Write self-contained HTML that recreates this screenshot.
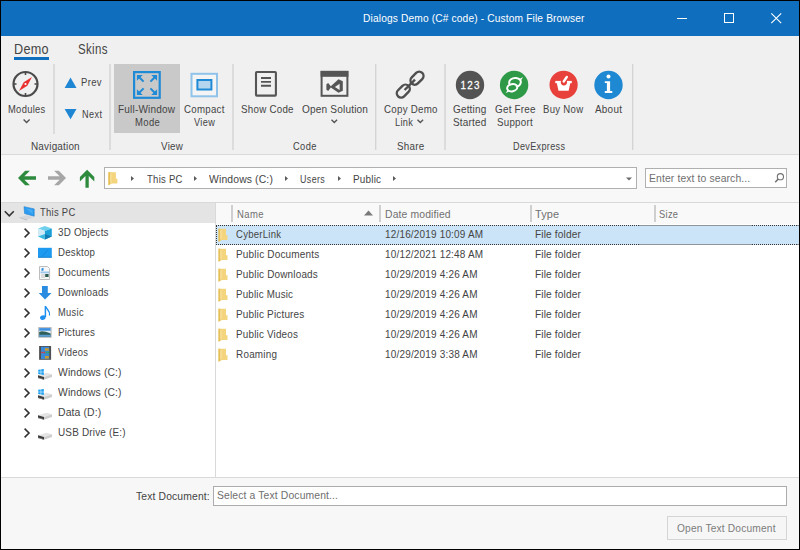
<!DOCTYPE html>
<html><head><meta charset="utf-8">
<style>
html,body{margin:0;padding:0;}
body{width:800px;height:550px;overflow:hidden;position:relative;background:#000;font-family:"Liberation Sans",sans-serif;}
.a{position:absolute;}
.t{position:absolute;white-space:nowrap;transform-origin:0 0;font-family:"Liberation Sans",sans-serif;}
svg{position:absolute;overflow:visible;}
</style></head><body>
<!-- title bar -->
<div class="a" style="left:1px;top:1px;width:798px;height:35px;background:#106ebe"></div>
<svg style="left:0;top:0" width="800" height="40">
  <line x1="677" y1="18.5" x2="687" y2="18.5" stroke="#fff" stroke-width="1"/>
  <rect x="724.5" y="13.5" width="9" height="9" fill="none" stroke="#fff" stroke-width="1"/>
  <path d="M771.3 13.3 L781.2 23.2 M781.2 13.3 L771.3 23.2" stroke="#fff" stroke-width="1.1"/>
</svg>
<!-- ribbon -->
<div class="a" style="left:1px;top:36px;width:798px;height:118px;background:#f0f0f0"></div>
<div class="a" style="left:1px;top:154px;width:798px;height:1px;background:#d9d9d9"></div>
<div class="a" style="left:14px;top:57px;width:35px;height:3px;background:#106ebe"></div>
<div class="a" style="left:114px;top:64px;width:66px;height:69px;background:#c9c9c9"></div>
<div class="a" style="left:53px;top:64px;width:2px;height:70px;background:#dcdcdc"></div>
<div class="a" style="left:109px;top:64px;width:2px;height:86px;background:#dcdcdc"></div>
<div class="a" style="left:232px;top:64px;width:2px;height:86px;background:#dcdcdc"></div>
<div class="a" style="left:375px;top:64px;width:1px;height:86px;background:#d4d4d4"></div>
<div class="a" style="left:376px;top:64px;width:1px;height:86px;background:#e6e6e6"></div>
<div class="a" style="left:444px;top:64px;width:2px;height:86px;background:#dcdcdc"></div>
<div class="a" style="left:632px;top:64px;width:1px;height:86px;background:#d4d4d4"></div>
<div class="a" style="left:633px;top:64px;width:1px;height:86px;background:#e6e6e6"></div>
<svg style="left:0;top:0" width="800" height="160">
  <!-- compass -->
  <circle cx="25.5" cy="84" r="12" fill="none" stroke="#4a4a4a" stroke-width="2.2"/>
  <path d="M25.5 72.5 V75 M25.5 93 V95.5 M14 84 H16.5 M34.5 84 H37" stroke="#4a4a4a" stroke-width="1.6"/>
  <path d="M32 77 L27.3 85.8 L19 91 L23.7 82.2 Z" fill="#e8302f"/>
  <circle cx="25.5" cy="84" r="1.1" fill="#fff"/>
  <!-- modules chevron -->
  <path d="M23.6 119.6 L26.6 122.6 L29.6 119.6" fill="none" stroke="#555" stroke-width="1.4"/>
  <!-- prev/next -->
  <path d="M64.6 88 L76.5 88 L70.55 77.5 Z" fill="#1f86d4"/>
  <path d="M64.6 109 L76.5 109 L70.55 119.3 Z" fill="#1f86d4"/>
  <!-- full window -->
  <rect x="134.1" y="72.1" width="25.6" height="25.7" fill="none" stroke="#1f8ad6" stroke-width="2.2"/>
  <path d="M136.9 74.9 H142.7 L136.9 80.7 Z M157.1 74.9 H151.3 L157.1 80.7 Z M136.9 95.1 H142.7 L136.9 89.3 Z M157.1 95.1 H151.3 L157.1 89.3 Z" fill="#1f8ad6"/>
  <path d="M139.2 77.2 L143.6 81.6 M154.8 77.2 L150.4 81.6 M139.2 92.8 L143.6 88.4 M154.8 92.8 L150.4 88.4" stroke="#1f8ad6" stroke-width="2"/>
  <!-- compact view -->
  <rect x="191.5" y="73.8" width="25.5" height="22.5" fill="#f4f4f4" stroke="#8fc3ea" stroke-width="2"/>
  <rect x="197.4" y="80" width="14" height="9.5" fill="#b5d5ee" stroke="#1f8ad6" stroke-width="2"/>
  <!-- show code -->
  <rect x="256" y="72" width="19.9" height="23.6" rx="0.8" fill="none" stroke="#555" stroke-width="2.1"/>
  <path d="M261 78 H271 M261 81.9 H271 M261 85.8 H271" stroke="#555" stroke-width="1.9"/>
  <!-- open solution -->
  <rect x="321.6" y="71.9" width="25.8" height="23.9" fill="none" stroke="#555" stroke-width="2"/>
  <rect x="320.6" y="70.9" width="27.8" height="5.9" fill="#555"/>
  <path d="M338.5 79.2 L342.8 81.2 L342.8 90.8 L338.5 92.8 L330.8 87.6 L328.2 90.9 L326.4 89.8 L326.4 84.2 L328.2 83.1 L330.8 86.2 Z" fill="#555"/>
  <path d="M334.9 86.9 L339.6 83.7 L339.6 90.1 Z" fill="#f0f0f0"/>
  <!-- open solution chevron -->
  <path d="M331.5 119.8 L334.3 122.6 L337.1 119.8" fill="none" stroke="#555" stroke-width="1.4"/>
  <!-- chain -->
  <g fill="none" stroke="#4f4f4f" stroke-width="2.4">
    <rect x="409.6" y="73.9" width="14.8" height="8.6" rx="4.3" transform="rotate(-45 417 78.2)"/>
    <rect x="395.9" y="86.8" width="14.8" height="8.6" rx="4.3" transform="rotate(-45 403.3 91.1)"/>
    <path d="M404.6 90 L415 79.6"/>
  </g>
  <path d="M417.5 119.8 L420.3 122.6 L423.1 119.8" fill="none" stroke="#555" stroke-width="1.4"/>
  <!-- circles -->
  <circle cx="470" cy="85" r="14.2" fill="#535353"/>
  <text transform="translate(470.6,88.9) scale(0.86,1)" x="0" y="0" text-anchor="middle" font-family="Liberation Sans" font-size="11.5" fill="#fff" stroke="#fff" stroke-width="0.25" letter-spacing="1.4">123</text>
  <circle cx="514.1" cy="85" r="14.2" fill="#2e9947"/>
  <g fill="none" stroke="#fff" stroke-width="2">
    <ellipse cx="512.2" cy="87.7" rx="5.1" ry="3.6" transform="rotate(-12 512.2 87.7)"/>
    <path d="M509.5 84.2 C508 80 512 77.8 516 78 C520 78.3 521.5 81 520.5 83.5 C519.5 86 517.5 86.5 516 86"/>
  </g>
  <path d="M519.5 79 L523 77 L521 80.5 Z M507.5 90.5 L505.5 93 L509 91.8 Z" fill="#fff"/>
  <circle cx="563.6" cy="84.8" r="14.1" fill="#e8403b"/>
  <rect x="555.3" y="80.9" width="16.5" height="2.3" fill="#fff"/>
  <path d="M556.8 83 H570.3 L568.6 90.8 H558.5 Z" fill="#fff"/>
  <circle cx="563.9" cy="82.3" r="3.1" fill="#e8403b"/>
  <path d="M563.7 81.5 L566.8 77" stroke="#fff" stroke-width="2.4" stroke-linecap="round"/>
  <circle cx="608.5" cy="85" r="14.2" fill="#1f88d2"/>
  <circle cx="608.5" cy="76.5" r="2" fill="#fff"/>
  <path d="M604.8 81.2 H610.1 V91 H612.3 V93 H604.8 V91 H606.9 V83 H604.8 Z" fill="#fff"/>
</svg>
<!-- nav bar -->
<div class="a" style="left:1px;top:155px;width:798px;height:47px;background:#f8f8f8"></div>
<div class="a" style="left:1px;top:202px;width:798px;height:1px;background:#d9d9d9"></div>
<div class="a" style="left:104px;top:167px;width:531px;height:20px;border:1px solid #b0b0b0;background:#fff"></div>
<div class="a" style="left:645px;top:168px;width:140px;height:18px;border:1px solid #b0b0b0;background:#fff"></div>
<svg style="left:0;top:150px" width="800" height="50">
  <!-- back -->
  <defs><path id="arr" d="M0 0 L7.2 -7.2 L11.9 -7.2 L6.35 -1.65 L18 -1.65 L18 1.65 L6.35 1.65 L11.9 7.2 L7.2 7.2 Z"/></defs>
  <use href="#arr" fill="#2e8b3e" transform="translate(18,28)"/>
  <use href="#arr" fill="#a6a6a6" transform="translate(66,28) scale(-1,1)"/>
  <use href="#arr" fill="#2e8b3e" transform="matrix(0,1,1,0,87.1,19.7)"/>
  <!-- small folder -->
  <use href="#fld" x="108.4" y="22.2"/>
  <!-- chevrons -->
  <path d="M131 26 L134 28.5 L131 31 Z" fill="#5a5a5a"/>
  <path d="M194 26 L197 28.5 L194 31 Z" fill="#5a5a5a"/>
  <path d="M285 26 L288 28.5 L285 31 Z" fill="#5a5a5a"/>
  <path d="M338 26 L341 28.5 L338 31 Z" fill="#5a5a5a"/>
  <path d="M393 26 L396 28.5 L393 31 Z" fill="#5a5a5a"/>
  <path d="M626 27.5 H632 L629 30.5 Z" fill="#6a6a6a"/>
  <!-- search -->
  <circle cx="780.4" cy="26.7" r="3.1" fill="none" stroke="#707070" stroke-width="1.1"/>
  <path d="M778.2 29 L775.2 32.2" stroke="#707070" stroke-width="1.5"/>
</svg>
<!-- panels -->
<div class="a" style="left:1px;top:203px;width:214px;height:274px;background:#fff"></div>
<div class="a" style="left:215px;top:203px;width:1px;height:274px;background:#d9d9d9"></div>
<div class="a" style="left:216px;top:203px;width:583px;height:274px;background:#fff"></div>
<div class="a" style="left:1px;top:203px;width:214px;height:20px;background:#e4e4e4"></div>
<div class="a" style="left:216px;top:203px;width:583px;height:21px;background:#f9f9f9"></div>
<div class="a" style="left:231px;top:205px;width:2px;height:17px;background:#cfcfcf"></div>
<div class="a" style="left:379px;top:205px;width:2px;height:17px;background:#cfcfcf"></div>
<div class="a" style="left:530px;top:205px;width:2px;height:17px;background:#cfcfcf"></div>
<div class="a" style="left:654px;top:205px;width:2px;height:17px;background:#cfcfcf"></div>
<svg style="left:0;top:200px" width="800" height="30">
  <path d="M364 15.5 H373 L368.5 10.5 Z" fill="#7a7a7a"/>
</svg>
<div class="a" style="left:216px;top:225px;width:583px;height:20px;background:#cce4f7"></div>
<div class="a" style="left:216px;top:225px;width:583px;height:1px;border-top:1px dotted #333;box-sizing:border-box"></div>
<div class="a" style="left:216px;top:244px;width:583px;height:1px;border-top:1px dotted #333;box-sizing:border-box"></div>
<div class="a" style="left:216px;top:225px;width:1px;height:20px;border-left:1px dotted #333;box-sizing:border-box"></div>
<div class="a" style="left:639px;top:225px;width:113px;height:1px;background:#8e959b"></div>
<div class="a" style="left:639px;top:244px;width:113px;height:1px;background:#8e959b"></div>
<div class="a" style="left:797px;top:225px;width:2px;height:1px;background:#8e959b"></div>
<div class="a" style="left:797px;top:244px;width:2px;height:1px;background:#8e959b"></div>
<svg style="left:0;top:200px" width="800" height="280">
  <!-- tree chevrons -->
  <path d="M4.8 211.3 L9.3 215.8 L13.8 211.3" fill="none" stroke="#333" stroke-width="1.6" transform="translate(0,-200)"/>
  <g fill="none" stroke="#333" stroke-width="1.6">
    <path d="M24.6 28.6 L29 33.0 L24.6 37.4"/>
    <path d="M24.6 48.6 L29 53.0 L24.6 57.4"/>
    <path d="M24.6 68.6 L29 73.0 L24.6 77.4"/>
    <path d="M24.6 88.6 L29 93.0 L24.6 97.4"/>
    <path d="M24.6 108.6 L29 113.0 L24.6 117.4"/>
    <path d="M24.6 128.6 L29 133.0 L24.6 137.4"/>
    <path d="M24.6 148.6 L29 153.0 L24.6 157.4"/>
    <path d="M24.6 168.6 L29 173.0 L24.6 177.4"/>
    <path d="M24.6 188.6 L29 193.0 L24.6 197.4"/>
    <path d="M24.6 208.6 L29 213.0 L24.6 217.4"/>
    <path d="M24.6 228.6 L29 233.0 L24.6 237.4"/>
  </g>
  <g transform="translate(0,-200)">
  <!-- this pc -->
  <path d="M24 206.7 L34.2 208.9 V216.2 L24.6 213.6 Z" fill="#2d9cf0" stroke="#1b7fd0" stroke-width="0.6"/>
  <path d="M26 208.5 L32.5 210 V214 Z" fill="#5ab8f8" opacity="0.6"/>
  <path d="M19.5 217.2 L27 215.2 L34 217.3 L27 219.8 Z" fill="#d3d7dc"/>
  <path d="M19.5 217.2 L27 219.8 L27 220.4 L19.5 217.8 Z" fill="#aab0b6"/>
  <!-- 3d cube -->
  <path d="M44.9 226 L51.8 228.5 L44.9 231.1 L38 228.5 Z" fill="#6fd0ee"/>
  <path d="M38 228.5 L44.9 231.1 V239.5 L38 236.4 Z" fill="#cfeaf7"/>
  <path d="M44.9 231.1 L51.8 228.5 V236.4 L44.9 239.5 Z" fill="#1ba1d8"/>
  <path d="M44.9 234 L51.8 236.4 L44.9 239.5 Z" fill="#137bb3"/>
  <path d="M38 236.4 L44.9 234 V239.5 Z" fill="#38b8e0"/>
  <!-- desktop -->
  <rect x="38" y="247.8" width="13.8" height="9.8" fill="#1e9bf0"/>
  <rect x="38" y="256.8" width="13.8" height="0.8" fill="#1478c8"/>
  <path d="M42 256.5 L48 249.5" stroke="#1582d8" stroke-width="0.8"/>
  <!-- documents -->
  <path d="M39.5 266.5 H47.5 L49.6 268.6 V279.5 H39.5 Z" fill="#f7f7f7" stroke="#bdbdbd" stroke-width="1"/>
  <path d="M41.5 268.5 L43.5 267.8 V270.5 L41.5 271 Z" fill="#2a8ce0"/>
  <rect x="40.5" y="271.5" width="8.5" height="1.8" fill="#9cc8ec"/>
  <path d="M41 275 H45 M41 277 H45" stroke="#a8a8a8" stroke-width="0.7"/>
  <rect x="45.2" y="274" width="3.4" height="3" fill="#2d5b52"/>
  <!-- downloads -->
  <path d="M42 286 H47.8 V292.9 H51.5 L45 299.5 L38.7 292.9 H42 Z" fill="#2a8ce0"/>
  <!-- music -->
  <path d="M45.4 306 V317.2" stroke="#1e90f0" stroke-width="1.5"/>
  <ellipse cx="42.8" cy="317.6" rx="2.8" ry="2.2" transform="rotate(-20 42.8 317.6)" fill="#1e90f0"/>
  <path d="M45.6 306.5 C46.5 309.5 50.5 310.5 49.5 315.5" fill="none" stroke="#1e90f0" stroke-width="1.3"/>
  <!-- pictures -->
  <rect x="38.7" y="327.6" width="12.4" height="9.6" fill="#e2eef7" stroke="#b5b5b5" stroke-width="1"/>
  <rect x="39.2" y="328.1" width="11.4" height="2.6" fill="#3e8fe0"/>
  <path d="M39.2 332 C42 330.5 45 331.5 50.6 333.5 V336.7 H39.2 Z" fill="#2f5f5a"/>
  <path d="M39.2 334.8 H50.6 V336.7 H39.2 Z" fill="#5e9fd8"/>
  <!-- videos -->
  <rect x="39.1" y="346" width="12" height="13.8" fill="#505050"/>
  <rect x="41" y="346.8" width="8.2" height="12.2" fill="#3a8ad8"/>
  <rect x="45" y="348.2" width="3.8" height="2.6" fill="#c99a2e"/>
  <rect x="45" y="356" width="3.8" height="2.6" fill="#c99a2e"/>
  <rect x="41.3" y="351.8" width="1.6" height="1.4" fill="#e03a3a"/><rect x="43.4" y="351.8" width="1.6" height="1.4" fill="#e03a3a"/>
  <rect x="45.6" y="351.8" width="1.6" height="1.4" fill="#2ea84a"/><rect x="47.7" y="351.8" width="1.6" height="1.4" fill="#2ea84a"/>
  <!-- drives -->
  <g transform="translate(0,0)">
    <path d="M38 375.3 L46.5 372.7 L52 374.3 L44 376.9 Z" fill="#e4e4e4"/>
    <path d="M38 375.3 L44 376.9 L44 379.7 L38 378 Z" fill="#3c3c3c"/>
    <path d="M38.5 377.6 L44 379.2 L44 379.7 L38 378 Z" fill="#9a9a9a"/>
    <path d="M44 376.9 L52 374.3 L52 377 L44 379.7 Z" fill="#cdcdcd"/>
    <path d="M38.2 369.8 L40.7 369.4 V371.7 H38.2 Z M41.2 369.3 L43.8 368.9 V371.7 H41.2 Z M38.2 372.2 H40.7 V374.5 L38.2 374.1 Z M41.2 372.2 H43.8 V375 L41.2 374.6 Z" fill="#1ea0f0"/>
  </g>
  <g transform="translate(0,20)">
    <path d="M38 375.3 L46.5 372.7 L52 374.3 L44 376.9 Z" fill="#e4e4e4"/>
    <path d="M38 375.3 L44 376.9 L44 379.7 L38 378 Z" fill="#3c3c3c"/>
    <path d="M38.5 377.6 L44 379.2 L44 379.7 L38 378 Z" fill="#9a9a9a"/>
    <path d="M44 376.9 L52 374.3 L52 377 L44 379.7 Z" fill="#cdcdcd"/>
    <path d="M38.2 369.8 L40.7 369.4 V371.7 H38.2 Z M41.2 369.3 L43.8 368.9 V371.7 H41.2 Z M38.2 372.2 H40.7 V374.5 L38.2 374.1 Z M41.2 372.2 H43.8 V375 L41.2 374.6 Z" fill="#1ea0f0"/>
  </g>
  <g transform="translate(0,40)">
    <path d="M38 375.3 L46.5 372.7 L52 374.3 L44 376.9 Z" fill="#e4e4e4"/>
    <path d="M38 375.3 L44 376.9 L44 379.7 L38 378 Z" fill="#3c3c3c"/>
    <path d="M38.5 377.6 L44 379.2 L44 379.7 L38 378 Z" fill="#9a9a9a"/>
    <path d="M44 376.9 L52 374.3 L52 377 L44 379.7 Z" fill="#cdcdcd"/>
  </g>
  <g transform="translate(0,60)">
    <path d="M38 375.3 L46.5 372.7 L52 374.3 L44 376.9 Z" fill="#e4e4e4"/>
    <path d="M38 375.3 L44 376.9 L44 379.7 L38 378 Z" fill="#3c3c3c"/>
    <path d="M38.5 377.6 L44 379.2 L44 379.7 L38 378 Z" fill="#9a9a9a"/>
    <path d="M44 376.9 L52 374.3 L52 377 L44 379.7 Z" fill="#cdcdcd"/>
  </g>
  </g>
  <!-- list folders -->
  <defs><g id="fld"><path d="M0 0 H7.5 V6.6 H9 V11.3 H3.5 L0 13.1 Z" fill="#f4d57e"/><path d="M0 0 H1.8 V12.1 L0 13.1 Z" fill="#e6bf58"/><path d="M2.4 1.5 V10.5" stroke="#fff3c8" stroke-width="0.6"/></g></defs>
  <use href="#fld" x="218.5" y="28.7"/><use href="#fld" x="218.5" y="48.7"/><use href="#fld" x="218.5" y="68.7"/><use href="#fld" x="218.5" y="88.7"/><use href="#fld" x="218.5" y="108.7"/><use href="#fld" x="218.5" y="128.7"/><use href="#fld" x="218.5" y="148.7"/>
</svg>
<!-- bottom panel -->
<div class="a" style="left:1px;top:477px;width:798px;height:1px;background:#d9d9d9"></div>
<div class="a" style="left:1px;top:478px;width:798px;height:71px;background:#f7f7f7"></div>
<div class="a" style="left:213px;top:486px;width:572px;height:18px;border:1px solid #acacac;background:#fff"></div>
<div class="a" style="left:667px;top:516px;width:118px;height:22px;border:1px solid #d5d5d5;background:#f6f6f6"></div>
<div class="t" style="left:362.50px;top:13px;font-size:11.5px;line-height:11.5px;transform:scaleX(0.8849);letter-spacing:0.170px;color:#ffffff">Dialogs Demo (C# code) - Custom File Browser</div>
<div class="t" style="left:13.60px;top:42px;font-size:14px;line-height:14px;transform:scaleX(0.9019);letter-spacing:0.306px;color:#444444">Demo</div>
<div class="t" style="left:77.50px;top:42px;font-size:14px;line-height:14px;transform:scaleX(0.8202);letter-spacing:0.433px;color:#444444">Skins</div>
<div class="t" style="left:7.80px;top:104px;font-size:11.5px;line-height:11.5px;transform:scaleX(0.8151);letter-spacing:0.381px;color:#444444">Modules</div>
<div class="t" style="left:81.20px;top:77px;font-size:11.5px;line-height:11.5px;transform:scaleX(0.8261);letter-spacing:0.387px;color:#444444">Prev</div>
<div class="t" style="left:81.50px;top:109px;font-size:11.5px;line-height:11.5px;transform:scaleX(0.7953);letter-spacing:0.484px;color:#444444">Next</div>
<div class="t" style="left:118.00px;top:104px;font-size:11.5px;line-height:11.5px;transform:scaleX(0.8708);letter-spacing:0.219px;color:#444444">Full-Window</div>
<div class="t" style="left:134.70px;top:117px;font-size:11.5px;line-height:11.5px;transform:scaleX(0.8226);letter-spacing:0.471px;color:#444444">Mode</div>
<div class="t" style="left:184.20px;top:104px;font-size:11.5px;line-height:11.5px;transform:scaleX(0.8384);letter-spacing:0.347px;color:#444444">Compact</div>
<div class="t" style="left:193.60px;top:117px;font-size:11.5px;line-height:11.5px;transform:scaleX(0.7947);letter-spacing:0.505px;color:#444444">View</div>
<div class="t" style="left:241.10px;top:104px;font-size:11.5px;line-height:11.5px;transform:scaleX(0.8490);letter-spacing:0.303px;color:#444444">Show Code</div>
<div class="t" style="left:301.50px;top:104px;font-size:11.5px;line-height:11.5px;transform:scaleX(0.8764);letter-spacing:0.197px;color:#444444">Open Solution</div>
<div class="t" style="left:383.70px;top:104px;font-size:11.5px;line-height:11.5px;transform:scaleX(0.8444);letter-spacing:0.321px;color:#444444">Copy Demo</div>
<div class="t" style="left:395.20px;top:117px;font-size:11.5px;line-height:11.5px;transform:scaleX(0.8023);letter-spacing:0.405px;color:#444444">Link</div>
<div class="t" style="left:453.30px;top:104px;font-size:11.5px;line-height:11.5px;transform:scaleX(0.8660);letter-spacing:0.218px;color:#444444">Getting</div>
<div class="t" style="left:453.30px;top:117px;font-size:11.5px;line-height:11.5px;transform:scaleX(0.8660);letter-spacing:0.218px;color:#444444">Started</div>
<div class="t" style="left:495.00px;top:104px;font-size:11.5px;line-height:11.5px;transform:scaleX(0.8618);letter-spacing:0.238px;color:#444444">Get Free</div>
<div class="t" style="left:497.00px;top:117px;font-size:11.5px;line-height:11.5px;transform:scaleX(0.8487);letter-spacing:0.282px;color:#444444">Support</div>
<div class="t" style="left:543.30px;top:104px;font-size:11.5px;line-height:11.5px;transform:scaleX(0.8327);letter-spacing:0.361px;color:#444444">Buy Now</div>
<div class="t" style="left:594.60px;top:104px;font-size:11.5px;line-height:11.5px;transform:scaleX(0.8628);letter-spacing:0.283px;color:#444444">About</div>
<div class="t" style="left:30.70px;top:141px;font-size:11.5px;line-height:11.5px;transform:scaleX(0.8640);letter-spacing:0.218px;color:#444444">Navigation</div>
<div class="t" style="left:160.50px;top:141px;font-size:11.5px;line-height:11.5px;transform:scaleX(0.8510);letter-spacing:0.342px;color:#444444">View</div>
<div class="t" style="left:292.70px;top:141px;font-size:11.5px;line-height:11.5px;transform:scaleX(0.8083);letter-spacing:0.494px;color:#444444">Code</div>
<div class="t" style="left:397.00px;top:141px;font-size:11.5px;line-height:11.5px;transform:scaleX(0.8544);letter-spacing:0.298px;color:#444444">Share</div>
<div class="t" style="left:512.90px;top:141px;font-size:11.5px;line-height:11.5px;transform:scaleX(0.7903);letter-spacing:0.424px;color:#444444">DevExpress</div>
<div class="t" style="left:146.80px;top:174px;font-size:11.5px;line-height:11.5px;transform:scaleX(0.8273);letter-spacing:0.326px;color:#444444">This PC</div>
<div class="t" style="left:208.80px;top:174px;font-size:11.5px;line-height:11.5px;transform:scaleX(0.9027);letter-spacing:0.156px;color:#444444">Windows (C:)</div>
<div class="t" style="left:300.00px;top:174px;font-size:11.5px;line-height:11.5px;transform:scaleX(0.7733);letter-spacing:0.512px;color:#444444">Users</div>
<div class="t" style="left:352.80px;top:174px;font-size:11.5px;line-height:11.5px;transform:scaleX(0.8612);letter-spacing:0.235px;color:#444444">Public</div>
<div class="t" style="left:649.00px;top:173px;font-size:11.5px;line-height:11.5px;transform:scaleX(0.9034);letter-spacing:0.122px;color:#6f6f6f">Enter text to search...</div>
<div class="t" style="left:135.75px;top:491px;font-size:11.5px;line-height:11.5px;transform:scaleX(0.8989);letter-spacing:0.159px;color:#444444">Text Document:</div>
<div class="t" style="left:216.50px;top:490px;font-size:11.5px;line-height:11.5px;transform:scaleX(0.9023);letter-spacing:0.136px;color:#6e6e6e">Select a Text Document...</div>
<div class="t" style="left:677.20px;top:523px;font-size:11.5px;line-height:11.5px;transform:scaleX(0.8873);letter-spacing:0.188px;color:#7d7d7d">Open Text Document</div>
<div class="t" style="left:236.90px;top:209px;font-size:11.5px;line-height:11.5px;transform:scaleX(0.8248);letter-spacing:0.495px;color:#707070">Name</div>
<div class="t" style="left:384.75px;top:209px;font-size:11.5px;line-height:11.5px;transform:scaleX(0.9022);letter-spacing:0.147px;color:#707070">Date modified</div>
<div class="t" style="left:534.50px;top:209px;font-size:11.5px;line-height:11.5px;transform:scaleX(0.9504);letter-spacing:0.098px;color:#707070">Type</div>
<div class="t" style="left:659.40px;top:209px;font-size:11.5px;line-height:11.5px;transform:scaleX(0.8062);letter-spacing:0.406px;color:#707070">Size</div>
<div class="t" style="left:40.00px;top:207px;font-size:11.5px;line-height:11.5px;transform:scaleX(0.8209);letter-spacing:0.341px;color:#444444">This PC</div>
<div class="t" style="left:57.50px;top:227px;font-size:11.5px;line-height:11.5px;transform:scaleX(0.8536);letter-spacing:0.251px;color:#444444">3D Objects</div>
<div class="t" style="left:57.50px;top:247px;font-size:11.5px;line-height:11.5px;transform:scaleX(0.8385);letter-spacing:0.310px;color:#444444">Desktop</div>
<div class="t" style="left:57.50px;top:267px;font-size:11.5px;line-height:11.5px;transform:scaleX(0.8573);letter-spacing:0.281px;color:#444444">Documents</div>
<div class="t" style="left:57.50px;top:287px;font-size:11.5px;line-height:11.5px;transform:scaleX(0.8534);letter-spacing:0.283px;color:#444444">Downloads</div>
<div class="t" style="left:57.50px;top:307px;font-size:11.5px;line-height:11.5px;transform:scaleX(0.8034);letter-spacing:0.428px;color:#444444">Music</div>
<div class="t" style="left:57.50px;top:327px;font-size:11.5px;line-height:11.5px;transform:scaleX(0.8510);letter-spacing:0.241px;color:#444444">Pictures</div>
<div class="t" style="left:57.50px;top:347px;font-size:11.5px;line-height:11.5px;transform:scaleX(0.8152);letter-spacing:0.368px;color:#444444">Videos</div>
<div class="t" style="left:57.50px;top:367px;font-size:11.5px;line-height:11.5px;transform:scaleX(0.8971);letter-spacing:0.166px;color:#444444">Windows (C:)</div>
<div class="t" style="left:57.50px;top:387px;font-size:11.5px;line-height:11.5px;transform:scaleX(0.8971);letter-spacing:0.166px;color:#444444">Windows (C:)</div>
<div class="t" style="left:57.50px;top:407px;font-size:11.5px;line-height:11.5px;transform:scaleX(0.9051);letter-spacing:0.142px;color:#444444">Data (D:)</div>
<div class="t" style="left:57.50px;top:427px;font-size:11.5px;line-height:11.5px;transform:scaleX(0.8647);letter-spacing:0.210px;color:#444444">USB Drive (E:)</div>
<div class="t" style="left:236.00px;top:229px;font-size:11.5px;line-height:11.5px;transform:scaleX(0.8295);letter-spacing:0.308px;color:#444444">CyberLink</div>
<div class="t" style="left:384.50px;top:229px;font-size:11.5px;line-height:11.5px;transform:scaleX(0.8658);letter-spacing:0.217px;color:#444444">12/16/2019 10:09 AM</div>
<div class="t" style="left:534.50px;top:229px;font-size:11.5px;line-height:11.5px;transform:scaleX(0.8829);letter-spacing:0.155px;color:#444444">File folder</div>
<div class="t" style="left:236.00px;top:249px;font-size:11.5px;line-height:11.5px;transform:scaleX(0.8681);letter-spacing:0.217px;color:#444444">Public Documents</div>
<div class="t" style="left:384.50px;top:249px;font-size:11.5px;line-height:11.5px;transform:scaleX(0.8658);letter-spacing:0.217px;color:#444444">10/12/2021 12:48 AM</div>
<div class="t" style="left:534.50px;top:249px;font-size:11.5px;line-height:11.5px;transform:scaleX(0.8829);letter-spacing:0.155px;color:#444444">File folder</div>
<div class="t" style="left:236.00px;top:269px;font-size:11.5px;line-height:11.5px;transform:scaleX(0.8630);letter-spacing:0.224px;color:#444444">Public Downloads</div>
<div class="t" style="left:384.50px;top:269px;font-size:11.5px;line-height:11.5px;transform:scaleX(0.8675);letter-spacing:0.214px;color:#444444">10/29/2019 4:26 AM</div>
<div class="t" style="left:534.50px;top:269px;font-size:11.5px;line-height:11.5px;transform:scaleX(0.8829);letter-spacing:0.155px;color:#444444">File folder</div>
<div class="t" style="left:236.00px;top:289px;font-size:11.5px;line-height:11.5px;transform:scaleX(0.8476);letter-spacing:0.244px;color:#444444">Public Music</div>
<div class="t" style="left:384.50px;top:289px;font-size:11.5px;line-height:11.5px;transform:scaleX(0.8675);letter-spacing:0.214px;color:#444444">10/29/2019 4:26 AM</div>
<div class="t" style="left:534.50px;top:289px;font-size:11.5px;line-height:11.5px;transform:scaleX(0.8829);letter-spacing:0.155px;color:#444444">File folder</div>
<div class="t" style="left:236.00px;top:309px;font-size:11.5px;line-height:11.5px;transform:scaleX(0.8670);letter-spacing:0.193px;color:#444444">Public Pictures</div>
<div class="t" style="left:384.50px;top:309px;font-size:11.5px;line-height:11.5px;transform:scaleX(0.8675);letter-spacing:0.214px;color:#444444">10/29/2019 4:26 AM</div>
<div class="t" style="left:534.50px;top:309px;font-size:11.5px;line-height:11.5px;transform:scaleX(0.8829);letter-spacing:0.155px;color:#444444">File folder</div>
<div class="t" style="left:236.00px;top:329px;font-size:11.5px;line-height:11.5px;transform:scaleX(0.8579);letter-spacing:0.222px;color:#444444">Public Videos</div>
<div class="t" style="left:384.50px;top:329px;font-size:11.5px;line-height:11.5px;transform:scaleX(0.8675);letter-spacing:0.214px;color:#444444">10/29/2019 4:26 AM</div>
<div class="t" style="left:534.50px;top:329px;font-size:11.5px;line-height:11.5px;transform:scaleX(0.8829);letter-spacing:0.155px;color:#444444">File folder</div>
<div class="t" style="left:236.00px;top:349px;font-size:11.5px;line-height:11.5px;transform:scaleX(0.8596);letter-spacing:0.287px;color:#444444">Roaming</div>
<div class="t" style="left:384.50px;top:349px;font-size:11.5px;line-height:11.5px;transform:scaleX(0.8675);letter-spacing:0.214px;color:#444444">10/29/2019 3:38 AM</div>
<div class="t" style="left:534.50px;top:349px;font-size:11.5px;line-height:11.5px;transform:scaleX(0.8829);letter-spacing:0.155px;color:#444444">File folder</div>
</body></html>
